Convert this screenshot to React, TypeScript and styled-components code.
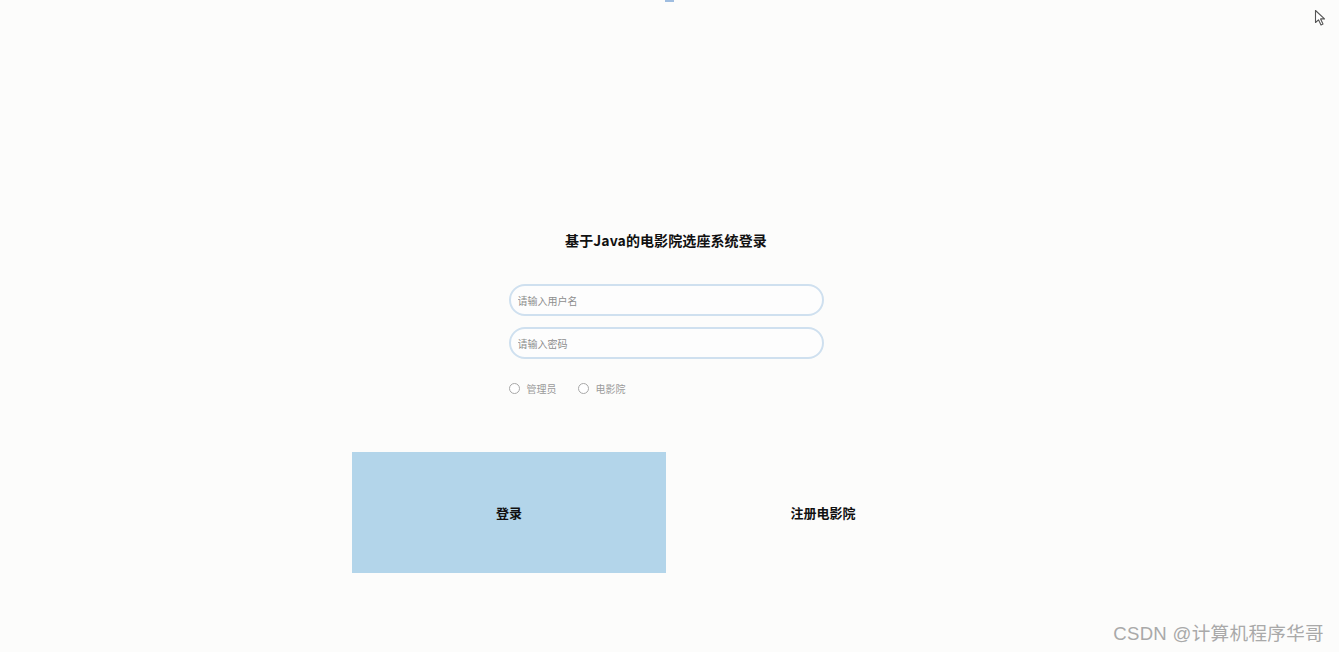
import React, { useState } from "react";
import styled, { createGlobalStyle } from "styled-components";

const Global = createGlobalStyle`
  html, body { margin: 0; padding: 0; background: #fcfcfb; }
  body { font-family: "Noto Sans CJK SC", "Noto Sans", sans-serif; }
  * { box-sizing: border-box; }
`;

const Page = styled.div`
  position: relative;
  width: 1339px;
  height: 652px;
  padding-right: 7px;
  background: #fcfcfb;
  overflow: hidden;
  display: flex;
  flex-direction: column;
  align-items: center;
`;

const TopMark = styled.div`
  position: absolute;
  left: 665px;
  top: 0;
  width: 9px;
  height: 2px;
  background: #9fbde0;
`;

const Cursor = styled.svg`
  position: absolute;
  left: 1314px;
  top: 9px;
`;

const Title = styled.h1`
  margin: 229px 0 0;
  font-size: 14px;
  line-height: 22px;
  font-weight: 700;
  color: #111;
  text-align: center;
  letter-spacing: 0.1px;
`;

const Form = styled.div`
  margin-top: 33px;
  width: 315px;
  display: flex;
  flex-direction: column;
  gap: 11px;
`;

const Input = styled.input`
  width: 315px;
  height: 32px;
  border: 2px solid #cfe0ef;
  border-radius: 16px;
  background: #fdfdfd;
  padding: 0 7px;
  font-family: "Noto Sans CJK SC", sans-serif;
  font-size: 10px;
  color: #333;
  outline: none;
  &::placeholder { color: #8d8d8d; }
`;

const RadioRow = styled.div`
  margin-top: 22px;
  width: 315px;
  display: flex;
  align-items: center;
  gap: 21px;
`;

const RadioLabel = styled.label`
  display: flex;
  align-items: center;
  gap: 7px;
  font-size: 10px;
  color: #9a9a9a;
  cursor: pointer;
`;

const RadioCircle = styled.span<{ $on: boolean }>`
  width: 11px;
  height: 11px;
  border-radius: 50%;
  border: 1px solid #a8a8a8;
  background: #fff;
  display: inline-flex;
  align-items: center;
  justify-content: center;
  &::after {
    content: "";
    width: 5px;
    height: 5px;
    border-radius: 50%;
    background: ${(p) => (p.$on ? "#409eff" : "transparent")};
  }
`;

const Buttons = styled.div`
  margin-top: 56px;
  width: 628px;
  display: flex;
`;

const Btn = styled.button<{ $primary?: boolean }>`
  flex: 1;
  height: 121px;
  border: none;
  background: ${(p) => (p.$primary ? "#b3d5ea" : "transparent")};
  font-family: "Noto Sans CJK SC", sans-serif;
  font-size: 13px;
  font-weight: 700;
  color: #111;
  cursor: pointer;
`;

const Watermark = styled.div`
  position: absolute;
  right: 15px;
  bottom: 7px;
  font-family: "Liberation Sans", "Noto Sans CJK SC", sans-serif;
  font-size: 18.6px;
  color: #a9a9a9;
  letter-spacing: 0.3px;
`;

export default function App() {
  const [role, setRole] = useState<string>("");
  return (
    <>
      <Global />
      <Page>
        <TopMark />
        <Cursor width="14" height="18" viewBox="0 0 14 18">
          <path d="M1.5 1.5 L1.5 13.5 L4.5 10.8 L7 16 L9 15 L6.6 9.9 L10.5 9.9 Z" fill="#fff" stroke="#555" strokeWidth="1.1" strokeLinejoin="round" />
        </Cursor>
        <Title>基于Java的电影院选座系统登录</Title>
        <Form>
          <Input placeholder="请输入用户名" />
          <Input type="password" placeholder="请输入密码" />
        </Form>
        <RadioRow>
          <RadioLabel onClick={() => setRole("admin")}>
            <RadioCircle $on={role === "admin"} />
            管理员
          </RadioLabel>
          <RadioLabel onClick={() => setRole("cinema")}>
            <RadioCircle $on={role === "cinema"} />
            电影院
          </RadioLabel>
        </RadioRow>
        <Buttons>
          <Btn $primary>登录</Btn>
          <Btn>注册电影院</Btn>
        </Buttons>
        <Watermark>CSDN @计算机程序华哥</Watermark>
      </Page>
    </>
  );
}
